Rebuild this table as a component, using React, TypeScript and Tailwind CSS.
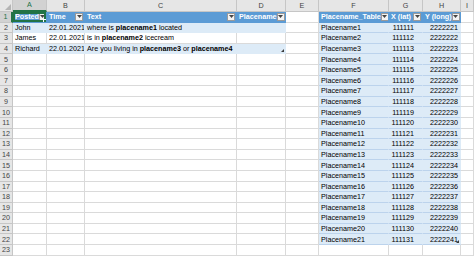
import React from 'react';

type Part = { t: string; b?: boolean };
type Cell = {
  parts: Part[];
  kind: 'head' | 'band' | 'plain' | 'list';
  align?: 'left' | 'right';
  pad?: string;
  dropdown?: boolean;
  handle?: boolean;
};

const COLS = ['A', 'B', 'C', 'D', 'E', 'F', 'G', 'H', 'I'];
const ROWS = Array.from({ length: 23 }, (_, i) => i + 1);

const posts = [
  { who: 'John', when: '22.01.2021', text: [{ t: 'where is ' }, { t: 'placename1', b: true }, { t: ' located' }] },
  { who: 'James', when: '22.01.2021', text: [{ t: 'is in ' }, { t: 'placename2', b: true }, { t: ' icecream' }] },
  {
    who: 'Richard',
    when: '22.01.2021',
    text: [{ t: 'Are you living in ' }, { t: 'placename3', b: true }, { t: ' or ' }, { t: 'placename4', b: true }],
  },
];

const postHeads = ['Posted', 'Time', 'Text', 'Placename'];
const placeHeads = ['Placename_Table', 'X (lat)', 'Y (long)'];

// work out what sits in a given cell (row is 1-based, col is 'A'..'I')
function getCell(row: number, col: string): Cell | null {
  const pi = ['A', 'B', 'C', 'D'].indexOf(col);
  if (pi >= 0 && row <= 4) {
    if (row === 1) return { parts: [{ t: postHeads[pi], b: true }], kind: 'head', dropdown: true };
    const p = posts[row - 2];
    const kind = row % 2 === 0 ? 'band' : 'plain';
    const parts = pi === 0 ? [{ t: p.who }] : pi === 1 ? [{ t: p.when }] : pi === 2 ? p.text : [];
    return { parts, kind, handle: row === 4 && col === 'D' };
  }
  const fi = ['F', 'G', 'H'].indexOf(col);
  if (fi >= 0 && row <= 22) {
    if (row === 1) return { parts: [{ t: placeHeads[fi], b: true }], kind: 'head', dropdown: true };
    const n = row - 1;
    if (fi === 0) return { parts: [{ t: `Placename${n}` }], kind: 'list' };
    if (fi === 1) return { parts: [{ t: String(111110 + n) }], kind: 'list', align: 'right', pad: 'pr-[8px]' };
    return { parts: [{ t: String(2222220 + n) }], kind: 'list', align: 'right', pad: 'pr-[2px]', handle: row === 22 };
  }
  return null;
}

const Dropdown = () => (
  <span className="ml-auto flex h-[8px] w-[8px] shrink-0 items-center justify-center border border-[#9a9a9a] bg-[#f3f3f3]">
    <svg width="5" height="3" viewBox="0 0 5 3">
      <polygon points="0,0 5,0 2.5,3" fill="#444" />
    </svg>
  </span>
);

const SheetCell = ({ row, col }: { row: number; col: string }) => {
  const cell = getCell(row, col);
  const selected = row === 1 && col === 'A';
  let tone = 'bg-white border-[#dadada] text-black';
  if (cell?.kind === 'head') tone = 'bg-[#5b9bd5] border-[#5b9bd5] text-white';
  if (cell?.kind === 'band') tone = 'bg-[#ddebf7] border-[#ddebf7] text-black';
  if (cell?.kind === 'list') tone = 'bg-[#ddebf7] border-r-[#ddebf7] border-b-[#bcd3ec] text-black';
  const align = cell?.align === 'right' ? 'justify-end' : 'justify-start';

  return (
    <div
      className={`relative flex items-center overflow-hidden whitespace-nowrap border-b border-r pl-[2px] ${tone} ${align} ${
        cell?.pad ?? 'pr-[1px]'
      }`}
    >
      {cell?.parts.map((p, i) => (
        <span key={i} className={p.b ? 'font-bold whitespace-pre' : 'whitespace-pre'}>
          {p.t}
        </span>
      ))}
      {cell?.dropdown && <Dropdown />}
      {cell?.handle && (
        <svg className="absolute bottom-[1px] right-[1px]" width="3" height="3" viewBox="0 0 3 3">
          <polygon points="3,0 3,3 0,3" fill="#3c3c3c" />
        </svg>
      )}
      {selected && (
        <>
          <div className="absolute inset-0 border-2 border-[#217346]" />
          <div className="absolute bottom-[-1px] right-[-1px] h-[4px] w-[4px] border border-white bg-[#217346]" />
        </>
      )}
    </div>
  );
};

export default function App() {
  return (
    <div className="h-[256px] w-[474px] overflow-hidden bg-white font-['Liberation_Sans',Arial,sans-serif] text-[7.2px] leading-none">
      <div className="grid grid-cols-[13px_34px_38px_152px_49px_33px_70px_34px_38px_1fr] grid-rows-[12px_repeat(23,10.6px)]">
        {/* corner + column letters */}
        <div className="relative border-b border-r border-[#c6c6c6] bg-[#e6e6e6]">
          <svg className="absolute bottom-[1px] right-[1px]" width="6" height="6" viewBox="0 0 6 6">
            <polygon points="6,0 6,6 0,6" fill="#b4b4b4" />
          </svg>
        </div>
        {COLS.map((c) => (
          <div
            key={c}
            className={
              c === 'A'
                ? 'flex items-center justify-center border-b-2 border-r border-b-[#217346] border-r-[#c6c6c6] bg-[#d2d2d2] text-[#217346]'
                : 'flex items-center justify-center border-b border-r border-[#c6c6c6] bg-[#e6e6e6] text-[#444]'
            }
          >
            {c}
          </div>
        ))}

        {ROWS.map((r) => (
          <React.Fragment key={r}>
            <div
              className={
                r === 1
                  ? 'flex items-center justify-center border-b border-r-2 border-b-[#c6c6c6] border-r-[#217346] bg-[#d2d2d2] text-[#217346]'
                  : 'flex items-center justify-center border-b border-r border-[#c6c6c6] bg-[#e6e6e6] text-[#444]'
              }
            >
              {r}
            </div>
            {COLS.map((c) => (
              <SheetCell key={c} row={r} col={c} />
            ))}
          </React.Fragment>
        ))}
      </div>
    </div>
  );
}
